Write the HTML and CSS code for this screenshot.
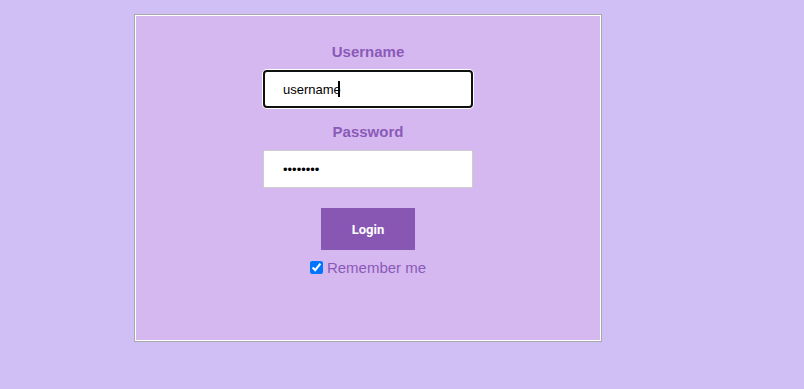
FILE: index.html
```html
<!DOCTYPE html>
<html lang="en">
  <head>
    <meta charset="UTF-8" />
    <meta name="viewport" content="width=device-width, initial-scale=1.0" />
    <title>Login</title>
    <link rel="stylesheet" href="styles.css">
  </head>
  <body>
    <div class="login-box">
      <form class="login-form">
        <label class="field-label" for="username">Username</label>
        <div class="input-wrap">
          <input id="username" class="field-input is-focused" type="text" value="username">
          <span class="caret"></span>
        </div>

        <label class="field-label pass-label" for="password">Password</label>
        <input id="password" class="field-input" type="password" value="password">

        <button class="login-btn" type="button">Login</button>

        <div class="remember">
          <input id="remember" type="checkbox" checked>
          <label for="remember">Remember me</label>
        </div>
      </form>
    </div>
  </body>
</html>
```

FILE: styles.css
```css
body {
  margin: 8px;
  background: #d0bff5;
  font-family: "Liberation Sans", Arial, sans-serif;
}

.login-box {
  box-sizing: border-box;
  width: 468px;
  height: 328px;
  margin: 6px 0 0 126px;
  background: #d6b8f0;
  border: 1px solid #a9a9a9;
  box-shadow: inset 0 0 0 1px #ffffff;
}

.login-form {
  display: flex;
  flex-direction: column;
  align-items: center;
  padding-top: 28px;
}

.field-label {
  font-size: 15px;
  font-weight: bold;
  line-height: 18px;
  color: #8a5ab8;
  margin-bottom: 9px;
}

.pass-label {
  margin-top: 15px;
  margin-bottom: 9px;
}

.input-wrap {
  position: relative;
}

.field-input {
  box-sizing: border-box;
  width: 210px;
  height: 38px;
  padding: 0 0 0 19px;
  border: 1px solid #cccccc;
  background: #ffffff;
  font-family: "Liberation Sans", Arial, sans-serif;
  font-size: 13px;
  color: #000000;
  outline: none;
}

.field-input.is-focused {
  border: 2px solid #101010;
  border-radius: 4px;
  padding-left: 18px;
  box-shadow: 0 0 0 1px #ffffff;
}

.caret {
  position: absolute;
  left: 75px;
  top: 11px;
  width: 2px;
  height: 16px;
  background: #000000;
}

.login-btn {
  margin-top: 20px;
  width: 94px;
  height: 42px;
  border: none;
  background: #8757b3;
  color: #ffffff;
  font-family: Roboto, "Liberation Sans", sans-serif;
  font-size: 13px;
  font-weight: bold;
}

.remember {
  display: flex;
  align-items: center;
  margin-top: 9px;
  font-size: 15px;
  line-height: 17px;
  color: #8a5ab8;
}

.remember input {
  width: 13px;
  height: 13px;
  margin: 0 4px 0 0;
}
```
